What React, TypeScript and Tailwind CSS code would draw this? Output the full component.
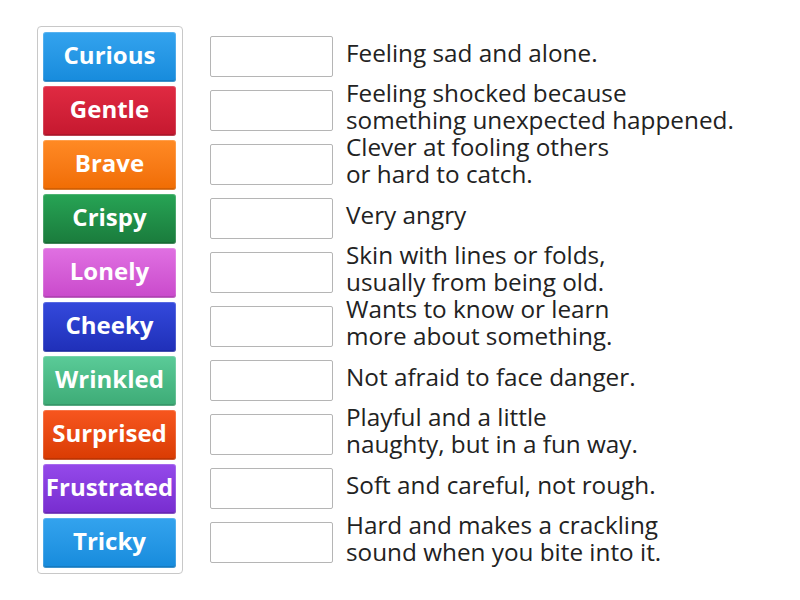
import React from "react";

const tiles: { label: string; cls: string }[] = [
  { label: "Curious", cls: "bg-gradient-to-b from-[#33a3ee] to-[#168bdc]" },
  { label: "Gentle", cls: "bg-gradient-to-b from-[#e02a42] to-[#c5182f]" },
  { label: "Brave", cls: "bg-gradient-to-b from-[#ff8a24] to-[#f06c02]" },
  { label: "Crispy", cls: "bg-gradient-to-b from-[#27a455] to-[#1a7b3c]" },
  { label: "Lonely", cls: "bg-gradient-to-b from-[#e070e2] to-[#c949cb]" },
  { label: "Cheeky", cls: "bg-gradient-to-b from-[#3449dc] to-[#1f2fb8]" },
  { label: "Wrinkled", cls: "bg-gradient-to-b from-[#5acb98] to-[#3dab76]" },
  { label: "Surprised", cls: "bg-gradient-to-b from-[#f7561e] to-[#d93b02]" },
  { label: "Frustrated", cls: "bg-gradient-to-b from-[#9549ea] to-[#772ccf]" },
  { label: "Tricky", cls: "bg-gradient-to-b from-[#33a3ee] to-[#168bdc]" },
];

const defs: string[][] = [
  ["Feeling sad and alone."],
  ["Feeling shocked because", "something unexpected happened."],
  ["Clever at fooling others", "or hard to catch."],
  ["Very angry"],
  ["Skin with lines or folds,", "usually from being old."],
  ["Wants to know or learn", "more about something."],
  ["Not afraid to face danger."],
  ["Playful and a little", "naughty, but in a fun way."],
  ["Soft and careful, not rough."],
  ["Hard and makes a crackling", "sound when you bite into it."],
];

export default function App() {
  return (
    <div
      className="w-[800px] h-[600px] bg-white flex items-start"
      style={{ fontFamily: '"Open Sans", "Noto Sans", sans-serif' }}
    >
      <div className="ml-[37px] mt-[26px] w-[146px] border border-[#c8c8c8] rounded-[4px] pl-[5px] pt-[5px] pb-[5px] flex flex-col gap-[4px]">
        {tiles.map((t) => (
          <div
            key={t.label}
            className={`w-[133px] h-[50px] rounded-[3px] flex items-center justify-center text-white font-bold text-[24px] leading-none shadow-[inset_0_0_0_1px_rgba(255,255,255,0.18),inset_0_-2px_0_rgba(0,0,0,0.12)] ${t.cls}`}
          >
            <span className="-mt-[5px]">{t.label}</span>
          </div>
        ))}
      </div>
      <div className="ml-[27px] mt-[32px] flex flex-col">
        {defs.map((lines, i) => (
          <div key={i} className="h-[54px] flex items-start">
            <div className="mt-[4px] w-[123px] h-[41px] border border-[#b5b5b5] rounded-[2px] bg-white shrink-0" />
            <div className="ml-[13px] h-[50px] flex flex-col justify-center text-[24.3px] leading-[27px] text-[#222] -mt-[5px]">
              {lines.map((l, j) => (
                <div key={j} className="whitespace-nowrap">
                  {l}
                </div>
              ))}
            </div>
          </div>
        ))}
      </div>
    </div>
  );
}
